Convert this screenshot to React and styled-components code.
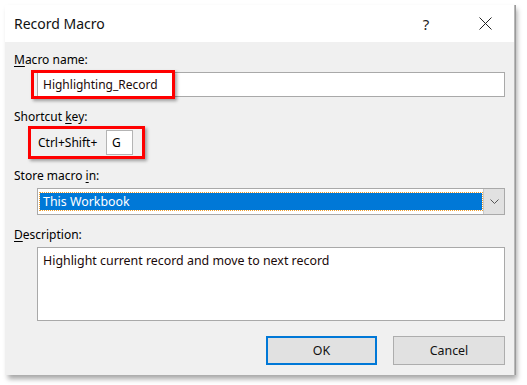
import React from 'react';
import styled, { createGlobalStyle } from 'styled-components';

const GlobalStyle = createGlobalStyle`
  html, body {
    margin: 0;
    padding: 0;
    background: #fff;
  }
  body {
    font-family: "Noto Sans", "Open Sans", sans-serif;
    color: #000;
  }
`;

const Page = styled.div`
  width: 527px;
  height: 385px;
  padding: 5px 0 0 5px;
  box-sizing: border-box;
`;

const Dialog = styled.div`
  width: 509px;
  height: 370px;
  display: flex;
  flex-direction: column;
  background: #f0f0f0;
  box-shadow: 1px 0 0 #b8b8b8, 2px 0 0 #9a9a9a, 3px 4px 5px rgba(0, 0, 0, 0.35);
`;

const TitleBar = styled.div`
  flex: 0 0 37px;
  display: flex;
  align-items: center;
  background: #fff;
  padding-left: 9px;
`;

const Title = styled.div`
  flex: 1 1 auto;
  font-size: 14px;
  color: #111;
`;

const TitleButton = styled.div`
  flex: 0 0 auto;
  width: ${(p) => p.$width}px;
  display: flex;
  align-items: center;
  justify-content: center;
  font-size: 15px;
  color: #222;
`;

const Body = styled.div`
  flex: 1 1 auto;
  display: flex;
  flex-direction: column;
  padding: 10px 9px 9px 9px;
`;

const Label = styled.div`
  font-size: 12px;
  line-height: 16px;
  height: 16px;
  margin-top: ${(p) => p.$top || 0}px;

  u {
    text-decoration: underline;
    text-underline-offset: 2px;
  }
`;

const Indent = styled.div`
  position: relative;
  margin-left: 23px;
  margin-top: ${(p) => p.$top || 0}px;
  display: flex;
  align-items: center;
`;

const TextBox = styled.div`
  flex: 1 1 auto;
  height: ${(p) => p.$height}px;
  box-sizing: border-box;
  background: #fff;
  border: 1px solid #a9a9a9;
  padding: ${(p) => (p.$multi ? '4px 5px' : '0 5px')};
  display: flex;
  align-items: ${(p) => (p.$multi ? 'flex-start' : 'center')};
  font-size: ${(p) => (p.$multi ? 12.4 : 12)}px;
  color: #1a0a0a;
`;

const KeyPrefix = styled.div`
  flex: 0 0 69px;
  font-size: 12px;
  padding-left: 1px;
  box-sizing: border-box;
`;

const KeyBox = styled.div`
  width: 27px;
  height: 25px;
  box-sizing: border-box;
  background: #fff;
  border: 1px solid #b4b4b4;
  display: flex;
  align-items: center;
  padding-left: 5px;
  font-size: 12px;
`;

const Combo = styled.div`
  flex: 1 1 auto;
  height: 27px;
  box-sizing: border-box;
  display: flex;
  background: #fff;
  border: 1px solid #a9a9a9;
`;

const ComboValue = styled.div`
  flex: 1 1 auto;
  margin: 4px 1px 4px 2px;
  background: #0078d7;
  color: #fff;
  font-size: 12.4px;
  display: flex;
  align-items: center;
  padding-left: 3px;
  outline: 1px dotted #f0a030;
`;

const ComboButton = styled.div`
  flex: 0 0 20px;
  background: #e1e1e1;
  border-left: 1px solid #c8c8c8;
  display: flex;
  align-items: center;
  justify-content: center;
`;

const Highlight = styled.div`
  position: absolute;
  left: ${(p) => p.$left}px;
  top: ${(p) => p.$top}px;
  width: ${(p) => p.$width}px;
  height: ${(p) => p.$height}px;
  box-sizing: border-box;
  border: 3.5px solid #ff0000;
  box-shadow: 2px 2px 3px rgba(0, 0, 0, 0.35);
  pointer-events: none;
`;

const Buttons = styled.div`
  display: flex;
  justify-content: flex-end;
  gap: 16px;
  margin-top: 15px;
`;

const Button = styled.div`
  width: ${(p) => p.$width}px;
  height: 29px;
  box-sizing: border-box;
  display: flex;
  align-items: center;
  justify-content: center;
  background: #e1e1e1;
  border: ${(p) => (p.$default ? '2px solid #0078d7' : '1px solid #adadad')};
  font-size: 12.4px;
  color: #111;
`;

const CloseIcon = () => (
  <svg width="13" height="13" viewBox="0 0 13 13">
    <path d="M0.5 0.5 L12.5 12.5 M12.5 0.5 L0.5 12.5" stroke="#222" strokeWidth="1" fill="none" />
  </svg>
);

const Chevron = () => (
  <svg width="9" height="5" viewBox="0 0 9 5">
    <path d="M0.5 0.5 L4.5 4.5 L8.5 0.5" stroke="#555" strokeWidth="1" fill="none" />
  </svg>
);

export default function App() {
  return (
    <>
      <GlobalStyle />
      <Page>
        <Dialog>
          <TitleBar>
            <Title>Record Macro</Title>
            <TitleButton $width={28}>?</TitleButton>
            <TitleButton $width={30} style={{ marginLeft: 30, marginRight: 14 }}>
              <CloseIcon />
            </TitleButton>
          </TitleBar>
          <Body>
            <Label>
              <u>M</u>acro name:
            </Label>
            <Indent $top={4}>
              <TextBox $height={25}>Highlighting_Record</TextBox>
              <Highlight $left={-6} $top={-2} $width={144} $height={29} />
            </Indent>

            <Label $top={12}>
              Shortcut <u>k</u>ey:
            </Label>
            <Indent $top={5}>
              <KeyPrefix>Ctrl+Shift+</KeyPrefix>
              <KeyBox>G</KeyBox>
              <Highlight $left={-9} $top={-4} $width={117} $height={33} />
            </Indent>

            <Label $top={13}>
              Store macro <u>i</u>n:
            </Label>
            <Indent $top={4}>
              <Combo>
                <ComboValue>This Workbook</ComboValue>
                <ComboButton>
                  <Chevron />
                </ComboButton>
              </Combo>
            </Indent>

            <Label $top={12}>
              <u>D</u>escription:
            </Label>
            <Indent $top={4}>
              <TextBox $height={74} $multi>
                Highlight current record and move to next record
              </TextBox>
            </Indent>

            <Buttons>
              <Button $width={111} $default>
                OK
              </Button>
              <Button $width={112}>Cancel</Button>
            </Buttons>
          </Body>
        </Dialog>
      </Page>
    </>
  );
}
